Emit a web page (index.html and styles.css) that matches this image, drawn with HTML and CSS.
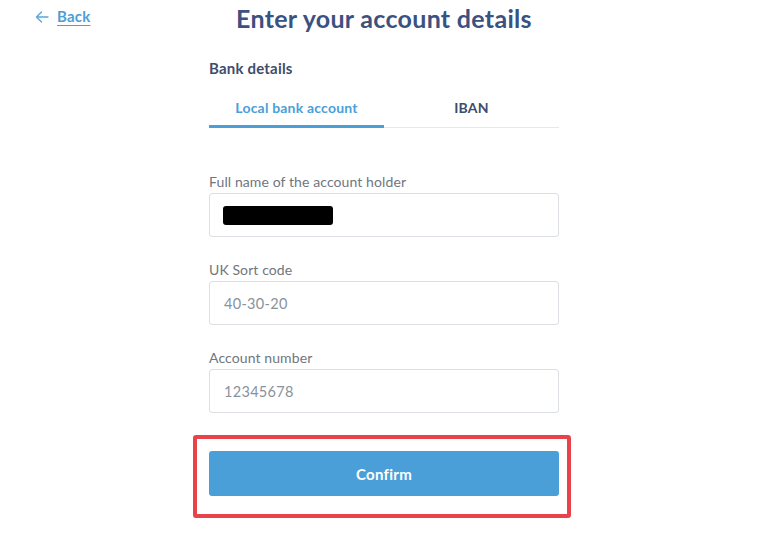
FILE: index.html
```html
<!DOCTYPE html>
<html>
<head>
<meta charset="utf-8">
<link rel="stylesheet" href="styles.css">
</head>
<body>
<div class="page">
  <header class="top">
    <a class="back" href="#"><span class="arrow"><svg width="14" height="12" viewBox="0 0 14 12"><path d="M13 6H1.5M6.5 1L1.5 6l5 5" fill="none" stroke="#5aa6dc" stroke-width="1.4" stroke-linecap="round" stroke-linejoin="round"/></svg></span><span class="back-text">Back</span></a>
    <h1 class="title">Enter your account details</h1>
  </header>
  <main class="form">
    <h2 class="section">Bank details</h2>
    <div class="tabs">
      <div class="tab active">Local bank account</div>
      <div class="tab">IBAN</div>
    </div>
    <div class="field first">
      <label class="label">Full name of the account holder</label>
      <div class="input"><span class="redact"></span></div>
    </div>
    <div class="field">
      <label class="label">UK Sort code</label>
      <div class="input"><span class="ph">40-30-20</span></div>
    </div>
    <div class="field">
      <label class="label">Account number</label>
      <div class="input"><span class="ph">12345678</span></div>
    </div>
    <div class="highlight">
      <button class="confirm">Confirm</button>
    </div>
  </main>
</div>
</body>
</html>
```
FILE: styles.css
```css
* { box-sizing: border-box; }
html, body { margin: 0; padding: 0; background: #fff; }
body { font-family: "Lato", "Open Sans", sans-serif; width: 768px; height: 533px; overflow: hidden; }
.page { position: relative; width: 768px; }
.top { position: relative; height: 50px; }
.back {
  position: absolute; left: 35px; top: 7px;
  display: flex; align-items: center; gap: 8px;
  color: #4a9fd8; text-decoration: none; font-size: 15px; font-weight: 700; letter-spacing: 0.2px;
}
.arrow { display: flex; margin-top: 1px; }
.back-text { text-decoration: underline; text-underline-offset: 3px; text-decoration-thickness: 1px; }
.title {
  margin: 0; padding-top: 3px; text-align: center;
  font-size: 25px; font-weight: 700; color: #3b5180; letter-spacing: 0.3px;
}
.form { width: 350px; margin: 0 auto; }
.section { margin: 9px 0 0; font-size: 15px; font-weight: 700; color: #3d4d6e; height: 18px; line-height: 18px; letter-spacing: 0.2px; }
.tabs { display: flex; margin-top: 18px; border-bottom: 1px solid #e6e8eb; }
.tab { flex: 1; text-align: center; font-size: 14px; font-weight: 700; color: #3d4d6e; height: 32px; line-height: 26px; letter-spacing: 0.2px; }
.tab.active { color: #4a9fd8; border-bottom: 3px solid #4a9fd8; margin-bottom: -2px; height: 33px; }
.field { margin-top: 25px; }
.field.first { margin-top: 46px; }
.label { display: block; font-size: 14px; color: #6f7680; height: 16px; line-height: 16px; letter-spacing: 0.1px; }
.input {
  margin-top: 3px; height: 44px; border: 1px solid #dcdfe3; border-radius: 3px;
  display: flex; align-items: center; padding-left: 14px;
}
.ph { font-size: 14.5px; color: #8a929c; letter-spacing: 0.3px; }
.redact { width: 110px; height: 19px; background: #000; border-radius: 3px; margin-left: -1px; }
.highlight {
  margin: 22px -12px 0 -16px; border: 4px solid #e8424a; border-radius: 3px;
  padding: 12px 8px 18px 12px;
}
.confirm {
  display: block; width: 350px; height: 45px; border: none; border-radius: 3px;
  background: #4a9fd9; color: #fff; font-family: inherit; font-size: 15px; font-weight: 700; letter-spacing: 0.3px;
}
```
